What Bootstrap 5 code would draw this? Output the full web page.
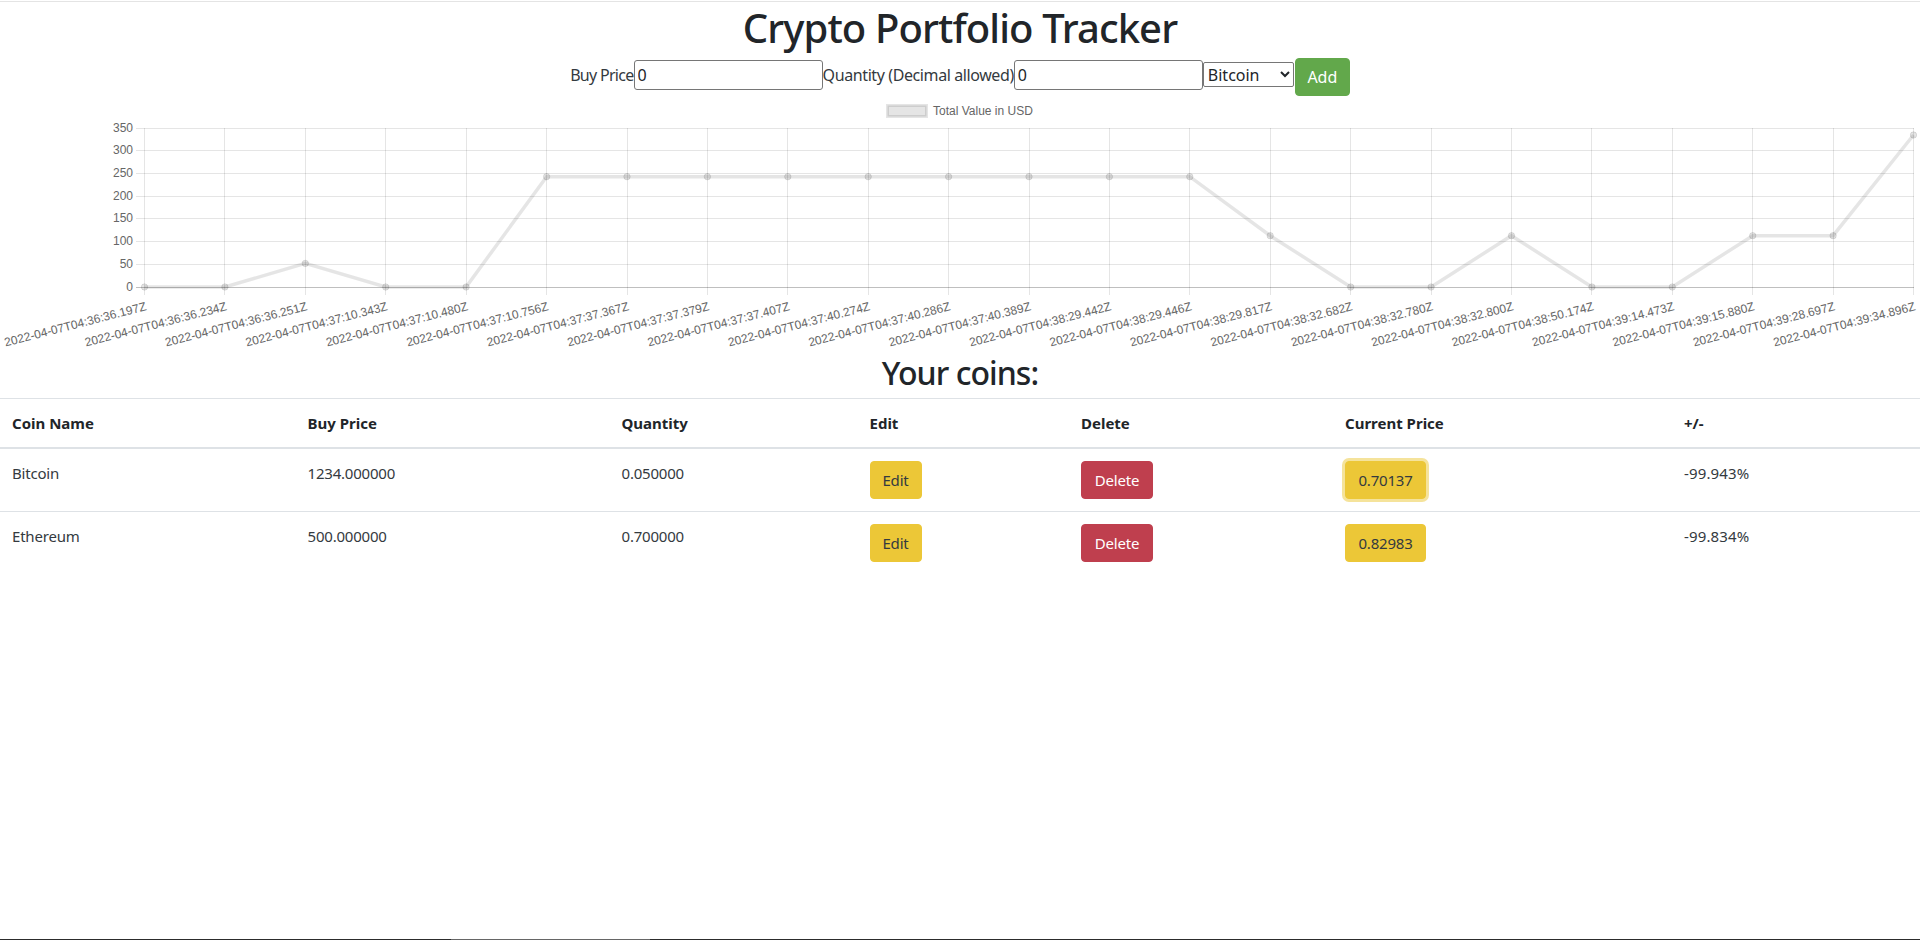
<!DOCTYPE html>
<html lang="en">
<head>
<meta charset="utf-8">
<title>Crypto Portfolio Tracker</title>
<link rel="stylesheet" href="https://cdn.jsdelivr.net/npm/bootstrap@5.3.0/dist/css/bootstrap.min.css">
<style>
html,body{height:100%}
body{font-family:"Noto Sans","Open Sans",sans-serif;color:#212529;background:#fff;font-size:16px;display:flex;flex-direction:column;min-height:940px;overflow:hidden}
.edge-top{height:2px;border-bottom:1px solid #e4e4e4;flex:none}
.page-main{flex:1 1 auto}
.page-title{font-size:40px;font-weight:500;line-height:48px;margin:0 0 6px;padding-top:2px;text-align:center;letter-spacing:-.9px}
.add-form{text-align:center;line-height:24px;height:38px;color:#343a40}
.lbl-buy{letter-spacing:-.7px}
.lbl-qty{letter-spacing:-.4px}
.add-form input{width:189px;height:30px;border:1px solid #767676;border-radius:3px;padding:1px 3px;font-size:16px;background:#fff;color:#212529}
.add-form select{width:91px;height:25px;border:1px solid #767676;border-radius:2px;font-size:16px;background:#fff;color:#212529}
.btn-add{background:#62a84b;border-color:#62a84b;color:#fff;width:55px;padding:6px 0;border-radius:4px;margin-left:1px;font-size:16px}
.chart-box{display:block;width:1920px;height:256px}
.chart-box text{font-family:"Liberation Sans",Arial,sans-serif;font-size:12px;fill:#666}
.grid-h{stroke:rgba(0,0,0,.1);stroke-width:1}
.grid-v{stroke:rgba(0,0,0,.1);stroke-width:1}
.axis-zero{stroke:rgba(0,0,0,.25);stroke-width:1}
.val-line{fill:none;stroke:rgba(0,0,0,.1);stroke-width:3.5}
.val-pt{fill:rgba(0,0,0,.1);stroke:rgba(0,0,0,.1);stroke-width:1}
.legend-swatch{fill:rgba(0,0,0,.1);stroke:rgba(0,0,0,.1);stroke-width:3}
.coins-title{font-size:32px;font-weight:500;line-height:38px;margin:0 0 6px;padding-top:2px;text-align:center;letter-spacing:-.95px}
.coin-table{table-layout:fixed;width:1920px;margin:0;--bs-table-border-color:#dee2e6;font-size:15px;letter-spacing:-.2px;border-top:1px solid #dee2e6;color:#343a40;border-collapse:separate;border-spacing:0}
.coin-table th,.coin-table td{padding:12px;line-height:24px;vertical-align:top}
.coin-table thead th{border-bottom:2px solid #dee2e6;font-weight:700;letter-spacing:0;color:#212529}
.coin-table tbody td:last-child{letter-spacing:.15px}
.coin-table tbody tr:last-child td{border-bottom:0}
.col-a{width:295.5px}.col-b{width:314px}.col-c{width:248px}.col-d{width:211.5px}.col-e{width:264px}.col-f{width:339px}
.btn-pill{height:38px;padding:6px 0;border-radius:4px;font-size:15px;letter-spacing:-.2px;line-height:24px}
.btn-edit{width:52px;background:#ecc737;border-color:#ecc737;color:#343a40}
.btn-del{width:72px;background:#bf3f4e;border-color:#bf3f4e;color:#fff}
.btn-price{width:81px;background:#ecc737;border-color:#ecc737;color:#343a40}
.btn-ring{box-shadow:0 0 0 3px rgba(236,199,55,.5)}
.edge-bottom{height:1px;flex:none;background:#2c2c2c;display:flex}
.edge-seg-a{width:451px}
.edge-seg-b{width:199px;background:#666}
</style>
</head>
<body>
<div class="edge-top"></div>
<main class="page-main">
<h1 class="page-title">Crypto Portfolio Tracker</h1>
<form class="add-form"><label class="lbl-buy" for="buy">Buy Price</label><input id="buy" type="text" value="0"><label class="lbl-qty" for="qty">Quantity (Decimal allowed)</label><input id="qty" type="text" value="0"><select aria-label="Coin"><option>Bitcoin</option><option>Ethereum</option></select><button type="button" class="btn btn-add">Add</button></form>
<svg class="chart-box" viewBox="0 96 1920 256" role="img" aria-label="Total Value in USD chart">
<rect class="legend-swatch" x="887.5" y="105.5" width="39" height="11"/>
<text x="933" y="115">Total Value in USD</text>
<g class="grid-h">
<line x1="136" x2="1914" y1="128.5" y2="128.5"/><line x1="136" x2="1914" y1="150.5" y2="150.5"/><line x1="136" x2="1914" y1="173.5" y2="173.5"/><line x1="136" x2="1914" y1="196.5" y2="196.5"/><line x1="136" x2="1914" y1="218.5" y2="218.5"/><line x1="136" x2="1914" y1="241.5" y2="241.5"/><line x1="136" x2="1914" y1="264.5" y2="264.5"/>
</g>
<line class="axis-zero" x1="136" x2="1914" y1="287.5" y2="287.5"/>
<g class="grid-v">
<line x1="144.5" x2="144.5" y1="128" y2="295"/><line x1="224.5" x2="224.5" y1="128" y2="295"/><line x1="305.5" x2="305.5" y1="128" y2="295"/><line x1="385.5" x2="385.5" y1="128" y2="295"/><line x1="466.5" x2="466.5" y1="128" y2="295"/><line x1="546.5" x2="546.5" y1="128" y2="295"/><line x1="627.5" x2="627.5" y1="128" y2="295"/><line x1="707.5" x2="707.5" y1="128" y2="295"/><line x1="787.5" x2="787.5" y1="128" y2="295"/><line x1="868.5" x2="868.5" y1="128" y2="295"/><line x1="948.5" x2="948.5" y1="128" y2="295"/><line x1="1029.5" x2="1029.5" y1="128" y2="295"/><line x1="1109.5" x2="1109.5" y1="128" y2="295"/><line x1="1189.5" x2="1189.5" y1="128" y2="295"/><line x1="1270.5" x2="1270.5" y1="128" y2="295"/><line x1="1350.5" x2="1350.5" y1="128" y2="295"/><line x1="1431.5" x2="1431.5" y1="128" y2="295"/><line x1="1511.5" x2="1511.5" y1="128" y2="295"/><line x1="1591.5" x2="1591.5" y1="128" y2="295"/><line x1="1672.5" x2="1672.5" y1="128" y2="295"/><line x1="1752.5" x2="1752.5" y1="128" y2="295"/><line x1="1833.5" x2="1833.5" y1="128" y2="295"/><line x1="1913.5" x2="1913.5" y1="128" y2="295"/>
</g>
<g text-anchor="end">
<text x="133" y="132">350</text><text x="133" y="154">300</text><text x="133" y="177">250</text><text x="133" y="200">200</text><text x="133" y="222">150</text><text x="133" y="245">100</text><text x="133" y="268">50</text><text x="133" y="291">0</text>
</g>
<polyline class="val-line" points="144.5,287 224.9,287 305.3,263.4 385.7,287 466.1,287 546.6,176.7 627,176.7 707.4,176.7 787.8,176.7 868.2,176.7 948.6,176.7 1029,176.7 1109.4,176.7 1189.8,176.7 1270.2,235.7 1350.7,287 1431.1,287 1511.5,235.7 1591.9,287 1672.3,287 1752.7,235.7 1833.1,235.7 1913.5,135"/>
<g class="val-pt">
<circle cx="144.5" cy="287" r="3.2"/><circle cx="224.9" cy="287" r="3.2"/><circle cx="305.3" cy="263.4" r="3.2"/><circle cx="385.7" cy="287" r="3.2"/><circle cx="466.1" cy="287" r="3.2"/><circle cx="546.6" cy="176.7" r="3.2"/><circle cx="627" cy="176.7" r="3.2"/><circle cx="707.4" cy="176.7" r="3.2"/><circle cx="787.8" cy="176.7" r="3.2"/><circle cx="868.2" cy="176.7" r="3.2"/><circle cx="948.6" cy="176.7" r="3.2"/><circle cx="1029" cy="176.7" r="3.2"/><circle cx="1109.4" cy="176.7" r="3.2"/><circle cx="1189.8" cy="176.7" r="3.2"/><circle cx="1270.2" cy="235.7" r="3.2"/><circle cx="1350.7" cy="287" r="3.2"/><circle cx="1431.1" cy="287" r="3.2"/><circle cx="1511.5" cy="235.7" r="3.2"/><circle cx="1591.9" cy="287" r="3.2"/><circle cx="1672.3" cy="287" r="3.2"/><circle cx="1752.7" cy="235.7" r="3.2"/><circle cx="1833.1" cy="235.7" r="3.2"/><circle cx="1913.5" cy="135" r="3.2"/>
</g>
<g text-anchor="end">
<text transform="translate(147 310) rotate(-14.5)">2022-04-07T04:36:36.197Z</text>
<text transform="translate(227.4 310) rotate(-14.5)">2022-04-07T04:36:36.234Z</text>
<text transform="translate(307.8 310) rotate(-14.5)">2022-04-07T04:36:36.251Z</text>
<text transform="translate(388.2 310) rotate(-14.5)">2022-04-07T04:37:10.343Z</text>
<text transform="translate(468.6 310) rotate(-14.5)">2022-04-07T04:37:10.480Z</text>
<text transform="translate(549.1 310) rotate(-14.5)">2022-04-07T04:37:10.756Z</text>
<text transform="translate(629.5 310) rotate(-14.5)">2022-04-07T04:37:37.367Z</text>
<text transform="translate(709.9 310) rotate(-14.5)">2022-04-07T04:37:37.379Z</text>
<text transform="translate(790.3 310) rotate(-14.5)">2022-04-07T04:37:37.407Z</text>
<text transform="translate(870.7 310) rotate(-14.5)">2022-04-07T04:37:40.274Z</text>
<text transform="translate(951.1 310) rotate(-14.5)">2022-04-07T04:37:40.286Z</text>
<text transform="translate(1031.5 310) rotate(-14.5)">2022-04-07T04:37:40.389Z</text>
<text transform="translate(1111.9 310) rotate(-14.5)">2022-04-07T04:38:29.442Z</text>
<text transform="translate(1192.3 310) rotate(-14.5)">2022-04-07T04:38:29.446Z</text>
<text transform="translate(1272.7 310) rotate(-14.5)">2022-04-07T04:38:29.817Z</text>
<text transform="translate(1353.2 310) rotate(-14.5)">2022-04-07T04:38:32.682Z</text>
<text transform="translate(1433.6 310) rotate(-14.5)">2022-04-07T04:38:32.780Z</text>
<text transform="translate(1514 310) rotate(-14.5)">2022-04-07T04:38:32.800Z</text>
<text transform="translate(1594.4 310) rotate(-14.5)">2022-04-07T04:38:50.174Z</text>
<text transform="translate(1674.8 310) rotate(-14.5)">2022-04-07T04:39:14.473Z</text>
<text transform="translate(1755.2 310) rotate(-14.5)">2022-04-07T04:39:15.880Z</text>
<text transform="translate(1835.6 310) rotate(-14.5)">2022-04-07T04:39:28.697Z</text>
<text transform="translate(1916 310) rotate(-14.5)">2022-04-07T04:39:34.896Z</text>
</g>
</svg>
<h2 class="coins-title">Your coins:</h2>
<table class="table coin-table">
<thead><tr><th class="col-a">Coin Name</th><th class="col-b">Buy Price</th><th class="col-c">Quantity</th><th class="col-d">Edit</th><th class="col-e">Delete</th><th class="col-f">Current Price</th><th>+/-</th></tr></thead>
<tbody>
<tr><td>Bitcoin</td><td>1234.000000</td><td>0.050000</td><td><button type="button" class="btn btn-pill btn-edit d-block">Edit</button></td><td><button type="button" class="btn btn-pill btn-del d-block">Delete</button></td><td><button type="button" class="btn btn-pill btn-price btn-ring d-block">0.70137</button></td><td>-99.943%</td></tr>
<tr><td>Ethereum</td><td>500.000000</td><td>0.700000</td><td><button type="button" class="btn btn-pill btn-edit d-block">Edit</button></td><td><button type="button" class="btn btn-pill btn-del d-block">Delete</button></td><td><button type="button" class="btn btn-pill btn-price d-block">0.82983</button></td><td>-99.834%</td></tr>
</tbody>
</table>
</main>
<div class="edge-bottom"><div class="edge-seg-a"></div><div class="edge-seg-b"></div></div>
<script src="https://cdn.jsdelivr.net/npm/bootstrap@5.3.0/dist/js/bootstrap.bundle.min.js"></script>
</body>
</html>
